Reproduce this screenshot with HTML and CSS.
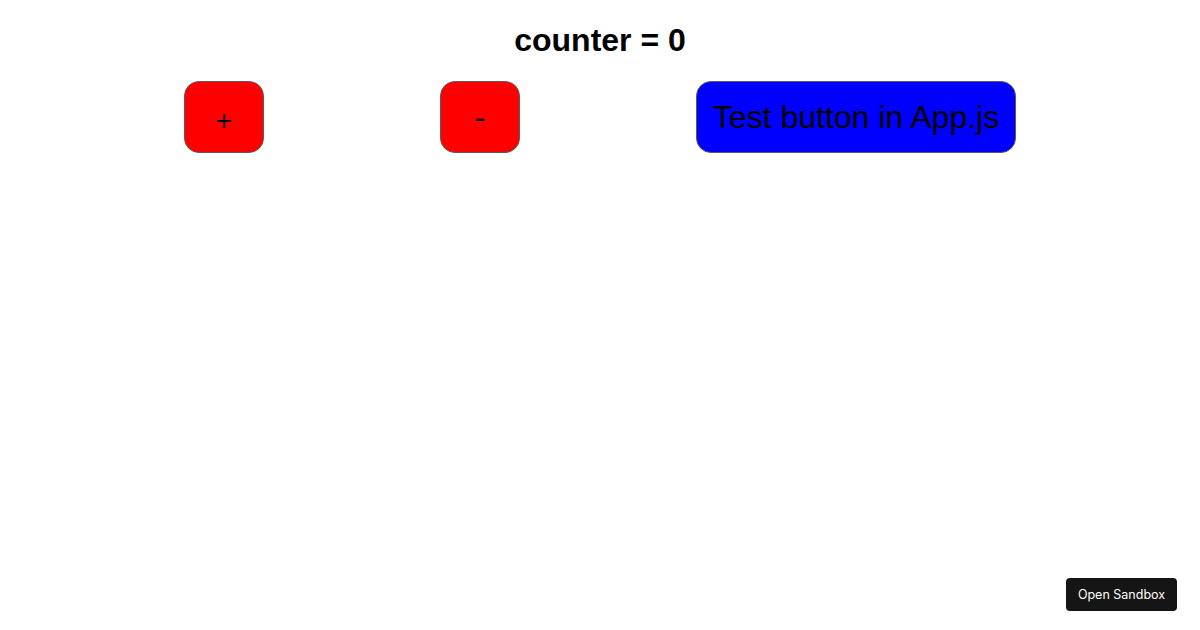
FILE: index.html
```html
<!DOCTYPE html>
<html>
<head>
<meta charset="utf-8">
<link rel="stylesheet" href="styles.css">
</head>
<body>
<div class="app">
  <h1 class="title">counter = 0</h1>
  <div class="row">
    <button class="btn btn-red"><span class="plus">+</span></button>
    <button class="btn btn-red">-</button>
    <button class="btn btn-blue">Test button in App.js</button>
  </div>
</div>
<a class="sandbox" href="#">Open Sandbox</a>
</body>
</html>
```
FILE: styles.css
```css
html, body {
  background: #fff;
}
body {
  margin: 8px;
  font-family: "Liberation Sans", Arial, sans-serif;
}
.app {
  text-align: center;
}
.title {
  font-size: 32px;
  font-weight: bold;
  margin: 14px 0 22px;
  color: #000;
}
.row {
  display: flex;
  justify-content: center;
  gap: 176px;
}
.btn {
  height: 72px;
  border: 1px solid #5a5a5a;
  border-radius: 15px;
  font-family: "Liberation Sans", Arial, sans-serif;
  font-size: 32px;
  color: #000;
  padding: 0;
  box-sizing: border-box;
}
.plus {
  display: inline-block;
  font-size: 28px;
  transform: translateY(2px);
}
.btn-red {
  width: 80px;
  background: #ff0000;
}
.btn-blue {
  width: 320px;
  background: #0000ff;
}
.sandbox {
  position: fixed;
  right: 23px;
  bottom: 19px;
  width: 111px;
  height: 33px;
  display: flex;
  align-items: center;
  justify-content: center;
  background: #151515;
  color: #fff;
  border-radius: 4px;
  font-family: Inter, "Liberation Sans", sans-serif;
  font-size: 12.5px;
  text-decoration: none;
  box-sizing: border-box;
}
```
